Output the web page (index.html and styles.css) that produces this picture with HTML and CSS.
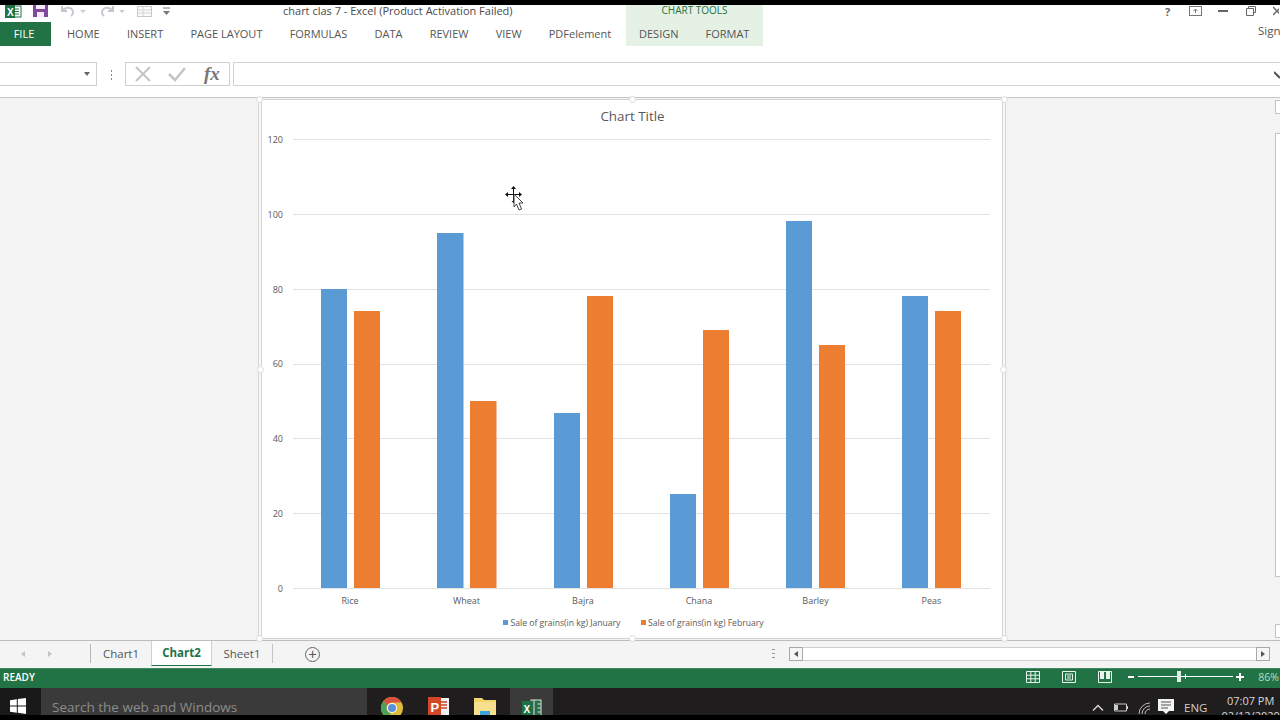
FILE: index.html
```html
<!DOCTYPE html>
<html lang="en">
<head>
<meta charset="utf-8">
<title>chart clas 7 - Excel</title>
<link rel="stylesheet" href="styles.css">
</head>
<body>
<div class="screen">
  <div class="letterbox"></div>

  <header class="titlebar">
    <div class="qat">
      <svg class="ic-app" width="17" height="14" viewBox="0 0 17 14"><rect x="8" y="1" width="8" height="11" fill="#fff" stroke="#217346"/><path d="M10 4h4M10 6.500h4M10 9h4" stroke="#217346"/><rect x="0" y="0" width="10" height="13" fill="#217346"/><text x="2" y="10.500" class="ic-x">X</text></svg>
      <svg class="ic-save" width="15" height="13" viewBox="0 0 15 13"><path d="M0 0h15v13H0z" fill="#80489c"/><rect x="3" y="0" width="9" height="5" fill="#f3e9f7"/><rect x="4" y="8" width="7" height="5" fill="#f3e9f7"/></svg>
      <svg class="ic-undo" width="16" height="12" viewBox="0 0 16 12"><path d="M2 1v5h5M2.500 5.500C5 2 10 2 12 4.500s1 5-1 6.500" fill="none" stroke="#c4c8cc" stroke-width="2"/></svg>
      <span class="qat-drop"></span>
      <svg class="ic-redo" width="16" height="12" viewBox="0 0 16 12"><path d="M14 1v5H9M13.500 5.500C11 2 6 2 4 4.500s-1 5 1 6.500" fill="none" stroke="#c4c8cc" stroke-width="2"/></svg>
      <span class="qat-drop"></span>
      <svg class="ic-form" width="15" height="11" viewBox="0 0 15 11"><rect x=".5" y=".5" width="14" height="10" fill="#fafafa" stroke="#c8c8c8"/><path d="M1 4h13M1 7h13M6 1v9" stroke="#d4d4d4"/></svg>
      <svg class="ic-more" width="7" height="8" viewBox="0 0 7 8"><path d="M0 1h7" stroke="#777"/><path d="M0 4h7L3.500 8z" fill="#777"/></svg>
    </div>
    <div class="doc-title">chart clas 7 - Excel (Product Activation Failed)</div>
    <div class="tools-label">CHART TOOLS</div>
    <div class="win-controls">
      <span class="win-help">?</span>
      <svg class="win-ribbon" width="13" height="10" viewBox="0 0 13 10"><rect x=".5" y=".5" width="12" height="9" fill="none" stroke="#777"/><path d="M6.500 3v4M4.500 5l2-2 2 2" fill="none" stroke="#777"/></svg>
      <svg class="win-min" width="10" height="2" viewBox="0 0 10 2"><rect width="10" height="2" fill="#666"/></svg>
      <svg class="win-restore" width="10" height="10" viewBox="0 0 10 10"><path d="M2.500 2.500v-2h7v6h-2M.5 2.500h7v7h-7z" fill="none" stroke="#666"/></svg>
      <svg class="win-close" width="6" height="10" viewBox="0 0 6 10"><path d="M0 1l8 8M8 1l-8 8" stroke="#666" stroke-width="1.500"/></svg>
    </div>
  </header>

  <nav class="ribbon">
    <div class="tab-file">FILE</div>
    <div class="tabs">
      <span class="tab">HOME</span>
      <span class="tab">INSERT</span>
      <span class="tab">PAGE LAYOUT</span>
      <span class="tab">FORMULAS</span>
      <span class="tab">DATA</span>
      <span class="tab">REVIEW</span>
      <span class="tab">VIEW</span>
      <span class="tab">PDFelement</span>
    </div>
    <div class="tabs-context">
      <span class="tab">DESIGN</span>
      <span class="tab">FORMAT</span>
    </div>
    <div class="signin">Sign</div>
  </nav>

  <section class="formula-bar">
    <div class="name-box"><span class="name-drop"></span></div>
    <div class="fb-dots"></div>
    <div class="fb-buttons">
      <svg width="18" height="16" viewBox="0 0 18 16"><path d="M2 1l14 14M16 1L2 15" stroke="#c6c6c6" stroke-width="2.200"/></svg>
      <svg width="20" height="16" viewBox="0 0 20 16"><path d="M2 8l6 6L18 2" fill="none" stroke="#c6c6c6" stroke-width="2.600"/></svg>
      <span class="fx">fx</span>
    </div>
    <div class="fb-input"><svg class="fb-caret" width="6" height="8" viewBox="0 0 6 8"><path d="M0 1l6 6" stroke="#555" stroke-width="2"/></svg></div>
  </section>

  <main class="workspace">
    <div class="chart-frame">
      <span class="handle h-tl"></span><span class="handle h-tm"></span><span class="handle h-tr"></span>
      <span class="handle h-ml"></span><span class="handle h-mr"></span>
      <span class="handle h-bl"></span><span class="handle h-bm"></span><span class="handle h-br"></span>
      <div class="chart">
        <svg class="chart-svg" width="740" height="537" viewBox="262 100 740 537">
          <text x="632.500" y="121" class="c-title">Chart Title</text>
          <g class="grid">
            <path d="M293 139.500h697M293 214.500h697M293 289.500h697M293 364.500h697M293 438.500h697M293 513.500h697M293 588.500h697"/>
          </g>
          <g class="c-axis">
            <text x="283" y="143">120</text>
            <text x="283" y="218">100</text>
            <text x="283" y="293">80</text>
            <text x="283" y="367">60</text>
            <text x="283" y="442">40</text>
            <text x="283" y="517">20</text>
            <text x="283" y="592">0</text>
          </g>
          <g class="blue">
            <rect x="321" y="289" width="26" height="299"/>
            <rect x="437" y="233" width="26.500" height="355"/>
            <rect x="554" y="413" width="26" height="175"/>
            <rect x="670" y="494" width="26" height="94"/>
            <rect x="786" y="221" width="26" height="367"/>
            <rect x="902" y="296" width="26" height="292"/>
          </g>
          <g class="orange">
            <rect x="354" y="311" width="26" height="277"/>
            <rect x="470" y="401" width="26.500" height="187"/>
            <rect x="587" y="296" width="26" height="292"/>
            <rect x="703" y="330" width="26" height="258"/>
            <rect x="819" y="345" width="26" height="243"/>
            <rect x="935" y="311" width="26" height="277"/>
          </g>
          <g class="c-cat">
            <text x="350" y="604">Rice</text>
            <text x="466.500" y="604">Wheat</text>
            <text x="583" y="604">Bajra</text>
            <text x="699" y="604">Chana</text>
            <text x="815.500" y="604">Barley</text>
            <text x="931.500" y="604">Peas</text>
          </g>
          <rect x="503" y="620" width="5" height="5" class="leg-blue"/>
          <text x="510.500" y="626" class="c-leg">Sale of grains(in kg) January</text>
          <rect x="641" y="620" width="5" height="5" class="leg-orange"/>
          <text x="648" y="626" class="c-leg">Sale of grains(in kg) February</text>
        </svg>
      </div>
    </div>
    <div class="v-scroll">
      <div class="vs-btn vs-top"></div>
      <div class="vs-thumb"></div>
      <div class="vs-btn vs-bottom"></div>
    </div>
    <svg class="cursor" width="20" height="28" viewBox="0 0 20 28">
      <path d="M8.500 1v16M1 8.500h15" stroke="#111" fill="none"/>
      <path d="M8.500 0l2.500 3H6zM8.500 17l-2-2h4zM0 8.500l3-2.500v5zM17 8.500l-3-2.500v5z" fill="#111"/>
      <path d="M9 8l9 9h-4l2.500 6-2.500 1-2.500-6-2.500 3z" fill="#fff" stroke="#444"/>
    </svg>
  </main>

  <div class="sheetbar">
    <div class="sheet-nav"><span class="nav-l"></span><span class="nav-r"></span></div>
    <div class="sheet-tab">Chart1</div>
    <div class="sheet-tab active">Chart2</div>
    <div class="sheet-tab last">Sheet1</div>
    <div class="sheet-add">+</div>
    <div class="sheet-dots"></div>
    <div class="h-scroll">
      <div class="hs-btn"><span class="nav-l dark"></span></div>
      <div class="hs-track"></div>
      <div class="hs-btn"><span class="nav-r dark"></span></div>
    </div>
  </div>

  <footer class="statusbar">
    <span class="ready">READY</span>
    <div class="status-right">
      <svg class="view-ic" width="14" height="12" viewBox="0 0 14 12"><path d="M.5.500h13v11H.5zM.5 4.200h13M.5 7.800h13M4.800.500v11M9.200.500v11" fill="none" stroke="#e8f3ec"/></svg>
      <svg class="view-ic" width="14" height="12" viewBox="0 0 14 12"><path d="M.5.500h13v11H.5z" fill="none" stroke="#e8f3ec"/><path d="M3.500 3h7v6h-7zM5 5h4M5 7h4" fill="none" stroke="#e8f3ec"/></svg>
      <svg class="view-ic" width="14" height="12" viewBox="0 0 14 12"><path d="M.5.500h13v11H.5z" fill="none" stroke="#e8f3ec"/><path d="M2 1h4v7H2zM8 1h4v7H8z" fill="#e8f3ec"/></svg>
      <div class="zoomer">
        <span class="z-minus"></span>
        <div class="z-track"><span class="z-thumb"></span><span class="z-mid"></span></div>
        <span class="z-plus"></span>
      </div>
      <span class="zoom-val">86%</span>
    </div>
  </footer>

  <div class="taskbar">
    <div class="start">
      <svg width="16" height="16" viewBox="0 0 16 16"><path d="M0 2.200l6.800-1v6.300H0zM7.800 1l8.200-1v7.500H7.800zM0 8.500h6.800v6.300l-6.800-1zM7.800 8.500H16V16l-8.200-1.200z" fill="#fff"/></svg>
    </div>
    <div class="search">Search the web and Windows</div>
    <div class="task-icons">
      <div class="task-ic">
        <svg width="22" height="22" viewBox="0 0 22 22"><circle cx="11" cy="11" r="11" fill="#e0bc3c"/><path d="M11 0a11 11 0 0 1 9.500 5.500H11a5.500 5.500 0 0 0-5 3.200L2.500 4A11 11 0 0 1 11 0z" fill="#d9503f"/><path d="M2.500 4L6 8.700a5.500 5.500 0 0 0 3.500 7.600L7.500 21.400A11 11 0 0 1 2.500 4z" fill="#4aa15a"/><circle cx="11" cy="11" r="5" fill="#fff"/><circle cx="11" cy="11" r="4" fill="#5a8fdc"/></svg>
      </div>
      <div class="task-ic">
        <svg width="22" height="20" viewBox="0 0 22 20"><rect x="9" y="1" width="12" height="19" fill="#f2f2f2"/><path d="M13 5h6M13 8h6M13 11h6" stroke="#c8452a" stroke-width="1.500"/><rect x="0" y="0" width="13" height="20" fill="#d24726"/><text x="2.500" y="15" class="ic-p">P</text></svg>
      </div>
      <div class="task-ic">
        <svg width="22" height="20" viewBox="0 0 22 20"><path d="M0 1h8l2 2h12v17H0z" fill="#f3d36b"/><rect x="0" y="5" width="22" height="15" fill="#f8e08e"/><rect x="6" y="14" width="10" height="6" fill="#3aa5d8"/></svg>
      </div>
      <div class="task-ic current">
        <svg width="20" height="18" viewBox="0 0 20 18"><rect x="9" y="1" width="10" height="16" fill="#2b6b49" stroke="#d8e6dc"/><path d="M12 1v16M15.500 5h3M15.500 9h3M15.500 13h3" stroke="#d8e6dc"/><rect x="0" y="2" width="10" height="14" fill="#1e7145"/><text x="1.500" y="13.500" class="ic-x2">X</text></svg>
      </div>
    </div>
    <div class="tray">
      <svg width="12" height="7" viewBox="0 0 12 7"><path d="M1 6.500l5-5 5 5" fill="none" stroke="#ddd" stroke-width="1.300"/></svg>
      <svg width="14" height="9" viewBox="0 0 14 9"><path d="M.5 1h12v7H.5z" fill="none" stroke="#ccc"/><rect x="1" y="2" width="3" height="5" fill="#ccc"/><rect x="13" y="3" width="1" height="3" fill="#ccc"/></svg>
      <svg width="13" height="12" viewBox="0 0 13 12"><path d="M1 12a11 11 0 0 1 11-11M4 12a8 8 0 0 1 8-8M7 12a5 5 0 0 1 5-5" fill="none" stroke="#bbb"/></svg>
      <svg class="tray-note" width="16" height="17" viewBox="0 0 16 17"><path d="M0 0h16v12h-5l-3 3-3-3H0z" fill="#f4f4f4"/><path d="M3 3h10M3 6h10M3 9h7" stroke="#555"/></svg>
      <span class="lang">ENG</span>
      <div class="clock"><span>07:07 PM</span><span>02/12/2020</span></div>
    </div>
  </div>
  <div class="letterbox-bottom"></div>
</div>
</body>
</html>
```
FILE: styles.css
```css
* { box-sizing: border-box; }
html, body { margin: 0; padding: 0; }
body { width: 1280px; height: 720px; overflow: hidden; background: #000; font-family: "Open Sans", "Liberation Sans", sans-serif; }
.screen { width: 1280px; height: 720px; display: flex; flex-direction: column; background: #fff; overflow: hidden; position: relative; }

.letterbox { height: 5px; background: #000; flex: none; }
.letterbox-bottom { height: 5px; background: #000; flex: none; }

/* title bar */
.titlebar { height: 17px; flex: none; display: flex; align-items: center; background: #fff; }
.qat { width: 283px; display: flex; align-items: center; height: 17px; padding-left: 5px; flex: none; overflow: hidden; }
.ic-app { margin-top: -4px; }
.ic-x { font: bold 10px "Liberation Sans", sans-serif; fill: #fff; }
.ic-save { margin-left: 11px; margin-top: -6px; }
.ic-undo { margin-left: 12px; margin-top: -6px; }
.ic-redo { margin-left: 13px; margin-top: -6px; }
.qat-drop { width: 0; height: 0; margin-left: 4px; margin-top: -5px; border-left: 3px solid transparent; border-right: 3px solid transparent; border-top: 3px solid #ccc; }
.ic-form { margin-left: 12px; margin-top: -5px; }
.ic-more { margin-left: 11px; margin-top: -5px; }
.doc-title { width: 343px; height: 17px; flex: none; font-size: 11px; color: #4a4a4a; line-height: 11px; white-space: nowrap; }
.tools-label { width: 137px; height: 17px; flex: none; background: #e5f1e5; color: #217346; font-size: 10px; line-height: 11px; text-align: center; }
.win-controls { flex: 1; position: relative; height: 17px; display: flex; align-items: center; padding-left: 402px; overflow: hidden; }
.win-help { font: bold 11px/11px "Open Sans", sans-serif; color: #666; width: 10px; margin-top: -5px; }
.win-ribbon { margin-left: 14px; margin-top: -5px; }
.win-min { margin-left: 16px; margin-top: -5px; }
.win-restore { margin-left: 18px; margin-top: -6px; }
.win-close { margin-left: 17px; margin-top: -5px; }

/* ribbon tabs */
.ribbon { height: 24px; flex: none; display: flex; align-items: center; background: #fff; }
.tab-file { width: 51px; height: 24px; background: #217346; color: #fff; font-size: 11px; line-height: 24px; text-align: center; flex: none; padding-right: 3px; }
.tabs { width: 575px; flex: none; display: flex; gap: 27.200px; padding-left: 16px; }
.tab { font-size: 11px; color: #555; line-height: 24px; white-space: nowrap; }
.tabs-context { width: 137px; height: 24px; flex: none; background: #e5f1e5; display: flex; gap: 27px; padding-left: 13px; }
.signin { margin-left: 495px; font-size: 11.500px; color: #555; margin-top: -7px; white-space: nowrap; }

/* formula bar */
.formula-bar { height: 51px; flex: none; display: flex; align-items: flex-start; padding-top: 16px; background: #fff; }
.name-box { width: 97px; height: 24px; flex: none; border: 1px solid #d0d0d0; border-left: 0; position: relative; display: flex; align-items: center; justify-content: flex-end; padding-right: 6px; }
.name-drop { width: 0; height: 0; border-left: 3.500px solid transparent; border-right: 3.500px solid transparent; border-top: 4px solid #666; }
.fb-dots { width: 28px; height: 24px; flex: none; background: radial-gradient(circle, #888 0.8px, transparent 1.100px) center 7px / 3px 4px no-repeat, radial-gradient(circle, #888 0.8px, transparent 1.100px) center 11px / 3px 4px no-repeat, radial-gradient(circle, #888 0.8px, transparent 1.100px) center 15px / 3px 4px no-repeat; }
.fb-buttons { width: 105px; height: 24px; flex: none; border: 1px solid #d0d0d0; display: flex; align-items: center; padding-left: 8px; gap: 15px; }
.fx { font: italic bold 19px "Liberation Serif", serif; color: #777; line-height: 22px; margin-left: 2px; }
.fb-input { flex: 1; height: 24px; margin-left: 3px; border: 1px solid #d4d4d4; border-right: 0; position: relative; display: flex; align-items: center; justify-content: flex-end; }
.fb-caret { display: block; margin-top: 2px; }

/* workspace */
.workspace { height: 544px; flex: none; background: #f3f3f3; border-top: 1px solid #c6c6c6; border-bottom: 1px solid #bdbdbd; position: relative; display: flex; padding: 1px 0 1px 258px; }
.chart-frame { width: 748px; height: 100%; position: relative; border-left: 1px solid #d6d6d6; border-right: 1px solid #d6d6d6; padding: 0 2px; background: #f7f7f7; }
.chart { width: 742px; height: 100%; background: #fff; border: 1px solid #d2d2d2; }
.chart-svg { display: block; }
.handle { position: absolute; width: 7px; height: 7px; border: 1px solid #dcdcdc; background: #fff; border-radius: 50%; }
.h-tl { left: -3px; top: -3px; }
.h-tm { left: 370px; top: -3px; }
.h-tr { right: -3px; top: -3px; }
.h-ml { left: -2px; top: 267px; }
.h-mr { right: -2px; top: 267px; }
.h-bl { left: -3px; bottom: -3px; }
.h-bm { left: 370px; bottom: -3px; }
.h-br { right: -3px; bottom: -3px; }

.c-title { font: 13.400px "Open Sans", sans-serif; fill: #595959; text-anchor: middle; }
.grid path { stroke: #e2e2e2; stroke-width: 1; fill: none; }
.c-axis text { font: 9px "Open Sans", sans-serif; fill: #595959; text-anchor: end; }
.c-cat text { font: 9px "Open Sans", sans-serif; fill: #595959; text-anchor: middle; }
.c-leg { font: 8.600px "Open Sans", sans-serif; fill: #595959; }
.blue rect, .leg-blue { fill: #5b9bd5; }
.orange rect, .leg-orange { fill: #ed7d31; }

.v-scroll { position: absolute; right: 0; top: 0; bottom: 0; width: 5px; display: flex; flex-direction: column; }
.vs-btn { height: 14px; background: #fff; border: 1px solid #c4c4c4; border-right: 0; flex: none; }
.vs-top { margin-top: 2px; }
.vs-thumb { flex: 1; background: #fff; border: 1px solid #c4c4c4; border-right: 0; margin: 19px 0 47px; }
.vs-bottom { margin-bottom: 2px; }
.cursor { position: absolute; left: 505px; top: 88px; }

/* sheet tabs */
.sheetbar { height: 27px; flex: none; display: flex; align-items: stretch; background: #f4f4f4; }
.sheet-nav { width: 91px; flex: none; display: flex; align-items: center; gap: 23px; padding-left: 21px; border-right: 1px solid #b8b8b8; margin: 3px 0 5px; }
.nav-l { width: 0; height: 0; border-top: 3px solid transparent; border-bottom: 3px solid transparent; border-right: 4px solid #c4c4c4; }
.nav-r { width: 0; height: 0; border-top: 3px solid transparent; border-bottom: 3px solid transparent; border-left: 4px solid #c4c4c4; }
.nav-l.dark { border-right-color: #555; }
.nav-r.dark { border-left-color: #555; }
.sheet-tab { width: 60px; flex: none; font-size: 11.500px; color: #555; text-align: center; line-height: 25px; }
.sheet-tab.active { background: #fff; color: #217346; font-weight: 700; border-bottom: 1px solid #217346; border-left: 1px solid #d0d0d0; border-right: 1px solid #d0d0d0; margin-bottom: 2px; width: 61px; margin-top: -1px; }
.sheet-tab.last { width: 61px; border-right: 1px solid #c4c4c4; margin: 3px 0 5px; line-height: 19px; }
.sheet-add { width: 15px; height: 15px; margin: 6px 0 0 32px; border: 1px solid #666; border-radius: 50%; color: #555; font: 14px/12px "Liberation Sans", sans-serif; text-align: center; flex: none; }
.sheet-dots { width: 3px; height: 11px; margin: 8px 0 0 452px; flex: none; background: repeating-linear-gradient(#999 0 1px, transparent 1px 4px); }
.h-scroll { display: flex; margin: 6px 0 7px 14px; height: 14px; width: 481px; flex: none; }
.hs-btn { width: 14px; flex: none; background: #f6f6f6; border: 1px solid #a8a8a8; display: flex; align-items: center; justify-content: center; }
.hs-track { flex: 1; background: #fff; border-top: 1px solid #d0d0d0; border-bottom: 1px solid #d0d0d0; }

/* status bar */
.statusbar { height: 20px; flex: none; background: #217346; border-top: 1px solid #3f8a60; display: flex; align-items: center; justify-content: space-between; padding: 0 0 4px 3px; }
.ready { color: #fff; font-size: 10px; font-weight: 600; line-height: 14px; }
.status-right { display: flex; align-items: center; }
.view-ic { margin-right: 22px; }
.zoomer { display: flex; align-items: center; margin-left: -6px; }
.z-minus { width: 6px; height: 2px; background: #fff; flex: none; }
.z-plus { width: 8px; height: 8px; flex: none; background: linear-gradient(#fff, #fff) center / 8px 2px no-repeat, linear-gradient(#fff, #fff) center / 2px 8px no-repeat; }
.z-track { width: 95px; height: 1px; background: #fff; margin: 0 3px 0 4px; position: relative; flex: none; }
.z-thumb { position: absolute; left: 39px; top: -5px; width: 4px; height: 11px; background: #dfeee5; }
.z-mid { position: absolute; left: 47px; top: -2px; width: 1px; height: 5px; background: #fff; }
.zoom-val { color: #b8dcc6; font-size: 10.500px; margin-left: 14px; margin-right: 1px; }

/* taskbar */
.taskbar { height: 27px; flex: none; background: #1f1d1d; display: flex; align-items: flex-start; overflow: hidden; }
.start { width: 41px; height: 27px; flex: none; background: #191919; display: flex; align-items: center; justify-content: center; padding-right: 5px; padding-top: 8px; }
.search { width: 326px; height: 27px; flex: none; background: #3a3a3a; color: #8c8c8c; font-size: 13.500px; line-height: 15px; padding: 12px 0 0 11px; white-space: nowrap; overflow: hidden; }
.task-icons { display: flex; width: 187px; flex: none; padding-left: 2px; }
.task-ic { width: 46.500px; height: 27px; display: flex; justify-content: center; padding-top: 9px; flex: none; }
.task-ic.current { background: #3a3a3a; width: 43px; padding: 11px 0 0 2px; margin-left: 1px; }
.ic-p { font: bold 13px "Liberation Sans", sans-serif; fill: #fff; }
.ic-x2 { font: bold 10px "Liberation Sans", sans-serif; fill: #fff; }
.tray { flex: 1; display: flex; align-items: center; height: 27px; padding-left: 538px; gap: 10px; padding-top: 12px; }
.tray svg { flex: none; }
.tray-note { margin-left: -3px; }
.lang { font-size: 11.500px; color: #d0d0d0; flex: none; }
.clock { display: flex; flex-direction: column; align-items: center; color: #d8d8d8; font-size: 11px; line-height: 15px; margin-left: 4px; flex: none; white-space: nowrap; }
```
